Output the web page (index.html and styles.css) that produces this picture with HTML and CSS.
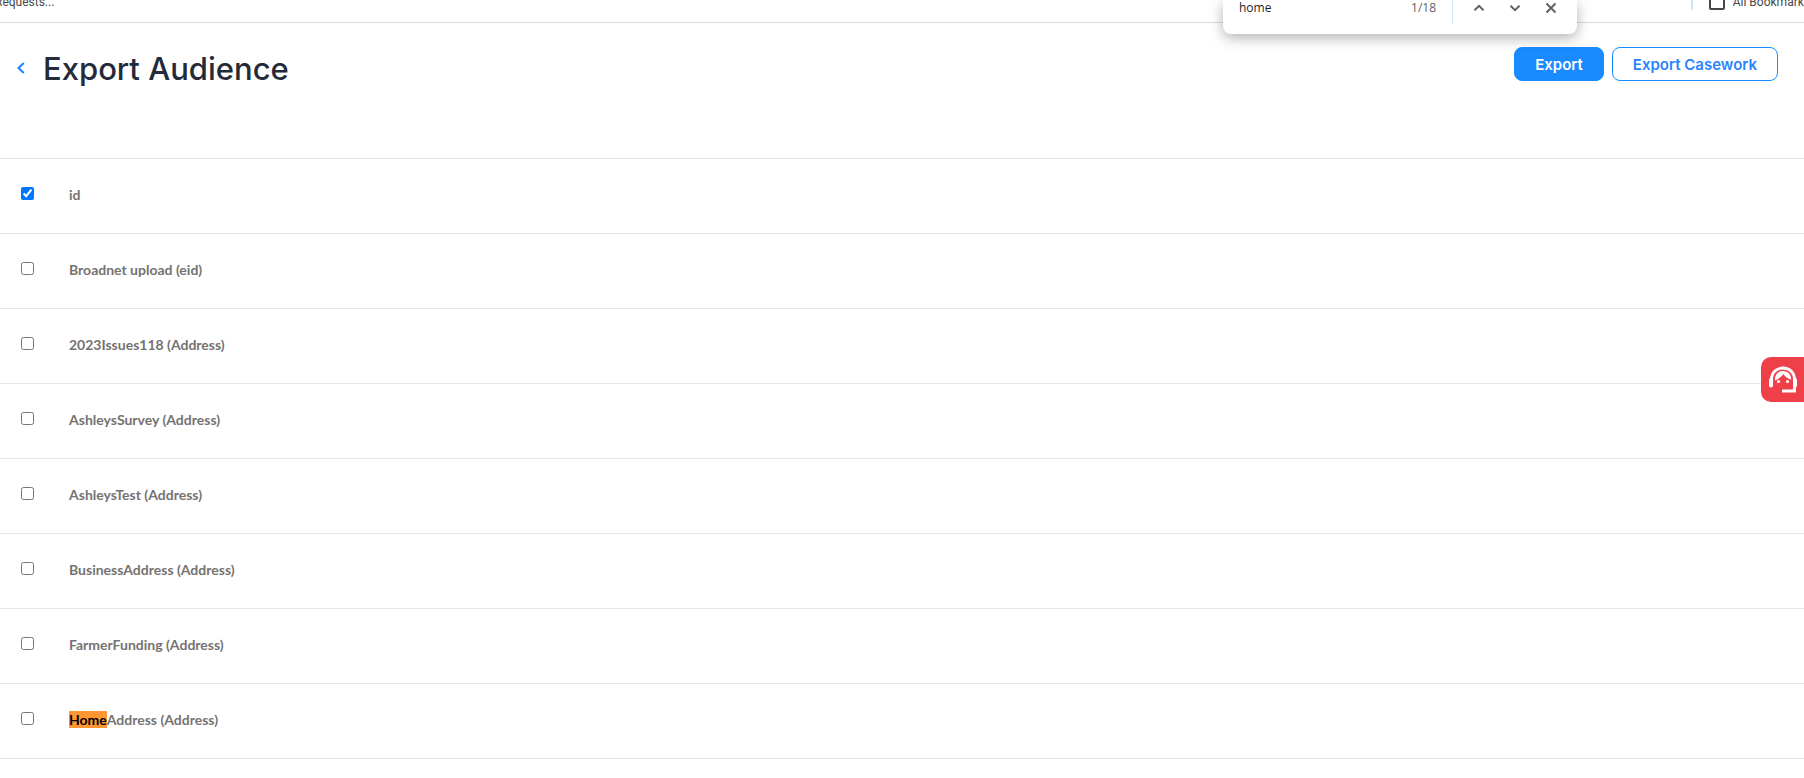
FILE: index.html
```html
<!DOCTYPE html>
<html lang="en">
<head>
<meta charset="utf-8">
<title>Export Audience</title>
<link rel="stylesheet" href="styles.css">
</head>
<body>
<div class="bookmarks">
  <span class="bookmark">Requests...</span>
  <div class="all-bookmarks">
    <svg class="folder" viewBox="0 0 16 16" aria-hidden="true"><rect x="1" y="1" width="14" height="14" rx="1" fill="none" stroke="#474747" stroke-width="2"/></svg>
    <span>All Bookmarks</span>
  </div>
</div>
<div class="findbar">
  <input class="find-input" type="text" value="home" aria-label="Find in page">
  <span class="find-count">1/18</span>
  <button class="find-btn" aria-label="Previous"><svg viewBox="0 0 12 12"><path d="M1.500 8.300 6 3.800l4.500 4.500"/></svg></button>
  <button class="find-btn" aria-label="Next"><svg viewBox="0 0 12 12"><path d="M1.500 3.700 6 8.200l4.500-4.500"/></svg></button>
  <button class="find-btn" aria-label="Close"><svg viewBox="0 0 12 12"><path d="M1.500 1.500l9 9M10.500 1.500l-9 9"/></svg></button>
</div>
<header class="page-head">
  <a class="back" href="#" aria-label="Back"><svg viewBox="0 0 8 12"><path d="M6.800 1 1.500 6l5.300 5"/></svg></a>
  <h1 class="title">Export Audience</h1>
  <div class="actions">
    <button class="btn btn-primary">Export</button>
    <button class="btn btn-outline">Export Casework</button>
  </div>
</header>
<ul class="fields">
  <li class="field"><input type="checkbox" id="f1" checked><label for="f1">id</label></li>
  <li class="field"><input type="checkbox" id="f2"><label for="f2">Broadnet upload (eid)</label></li>
  <li class="field"><input type="checkbox" id="f3"><label for="f3">2023Issues118 (Address)</label></li>
  <li class="field"><input type="checkbox" id="f4"><label for="f4">AshleysSurvey (Address)</label></li>
  <li class="field"><input type="checkbox" id="f5"><label for="f5">AshleysTest (Address)</label></li>
  <li class="field"><input type="checkbox" id="f6"><label for="f6">BusinessAddress (Address)</label></li>
  <li class="field"><input type="checkbox" id="f7"><label for="f7">FarmerFunding (Address)</label></li>
  <li class="field"><input type="checkbox" id="f8"><label for="f8"><mark>Home</mark>Address (Address)</label></li>
</ul>
<button class="support" aria-label="Support">
  <svg viewBox="0 0 30 28" fill="none">
    <path d="M3.500 15v-1.500C3.500 6.500 8.500 2 15 2s11.500 4.500 11.500 11.500V25H14" stroke="#fff" stroke-width="2.800"/>
    <rect x="1" y="12" width="4" height="9.500" rx="2" fill="#fff"/>
    <rect x="25" y="12" width="4" height="9.500" rx="2" fill="#fff"/>
    <path d="M6.800 14.500C6.800 8.500 10 5 15 5s8.200 3.500 8.200 8.500c-3.600-.8-6.200-2.600-7.700-5.500C13.800 10.500 10.800 13 6.800 14.500z" fill="#fff"/>
    <circle cx="10.500" cy="15.500" r="1.600" fill="#fff"/>
    <circle cx="19.500" cy="15.500" r="1.600" fill="#fff"/>
  </svg>
</button>
</body>
</html>
```
FILE: styles.css
```css
* { box-sizing: border-box; }
body {
  margin: 0;
  background: #fff;
  overflow: hidden;
  font-family: Lato, sans-serif;
}
button { font: inherit; cursor: pointer; }

.bookmarks {
  display: flex;
  justify-content: space-between;
  align-items: flex-start;
  height: 23px;
  overflow: hidden;
  border-bottom: 1px solid #dadce0;
  font: 12px/16px Roboto, sans-serif;
  color: #474747;
}
.bookmark { margin: -6px 0 0 -5px; }
.all-bookmarks {
  display: flex;
  align-items: flex-end;
  gap: 8px;
  margin: -7px -6px 0 0;
  padding-left: 16px;
  border-left: 2px solid #d3e3fd;
}
.all-bookmarks span { padding-top: 1px; }
.folder { width: 16px; height: 16px; }

.findbar {
  position: absolute;
  top: 0;
  right: 227px;
  display: flex;
  align-items: flex-start;
  width: 354px;
  height: 34px;
  padding: 0 20px 0 16px;
  background: #fff;
  border-radius: 0 0 8px 8px;
  box-shadow: 0 4px 14px rgba(60, 64, 67, 0.4);
  font: 12px/16px "Open Sans", sans-serif;
}
.find-input {
  flex: 1;
  min-width: 0;
  padding: 0;
  border: 0;
  outline: 0;
  background: none;
  font: inherit;
  color: #1f1f1f;
}
.find-count {
  height: 24px;
  padding-right: 16px;
  border-right: 1px solid #d3e3fd;
  color: #5f6368;
}
.find-btn {
  display: flex;
  margin-left: 24px;
  padding: 2px 0;
  border: 0;
  background: none;
}
.find-count + .find-btn { margin-left: 20px; }
.find-btn svg {
  width: 12px;
  height: 12px;
  fill: none;
  stroke: #5f6368;
  stroke-width: 2;
}

.page-head {
  display: flex;
  align-items: flex-start;
  height: 135px;
  padding: 24px 26px 0 17px;
  font-family: Inter, sans-serif;
}
.back { padding-top: 15px; line-height: 0; }
.back svg {
  width: 8px;
  height: 12px;
  fill: none;
  stroke: #1a84ff;
  stroke-width: 2;
}
.title {
  margin: 0 auto 0 18px;
  font-size: 31px;
  font-weight: 500;
  line-height: 44px;
  color: #232b3b;
}
.actions { display: flex; gap: 8px; }
.btn {
  height: 34px;
  padding: 0 20px;
  border: 1px solid #1a8aff;
  border-radius: 8px;
  font-size: 15px;
  font-weight: 600;
}
.btn-primary { background: #1a8aff; color: #fff; }
.btn-outline { background: #fff; color: #2a83fb; }

.fields { margin: 0; padding: 0; list-style: none; border-bottom: 1px solid #e6e6e6; }
.field {
  display: flex;
  align-items: center;
  gap: 35px;
  height: 75px;
  padding: 0 21px 2px;
  border-top: 1px solid #e6e6e6;
}
.field input { width: 13px; height: 13px; margin: 0 0 4px; accent-color: #0075ff; }
.field label { font-size: 14px; font-weight: 700; line-height: 16px; color: #757272; }
mark { background: #ff9632; color: #000; }

.support {
  position: absolute;
  right: 0;
  top: 357px;
  display: flex;
  align-items: center;
  width: 43px;
  height: 45px;
  padding: 0 6px 0 7px;
  border: 0;
  border-radius: 10px 0 0 10px;
  background: #ef404a;
}
.support svg { width: 30px; height: 28px; }
```
